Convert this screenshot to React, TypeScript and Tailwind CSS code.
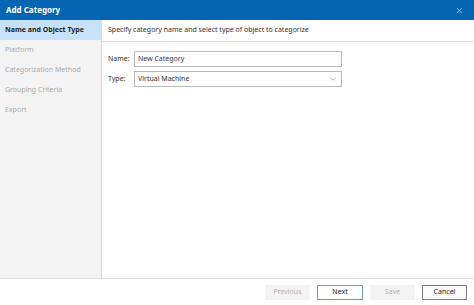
import { X, ChevronDown } from "lucide-react";

const steps = [
  { label: "Name and Object Type", active: true },
  { label: "Platform" },
  { label: "Categorization Method" },
  { label: "Grouping Criteria" },
  { label: "Export" },
];

const App = () => {
  return (
    <div
      className="w-[474px] h-[305px] flex flex-col bg-white text-[7px] text-[#333]"
      style={{ fontFamily: '"Noto Sans", "Liberation Sans", sans-serif' }}
    >
      {/* title bar */}
      <div className="h-[20px] bg-[#0565b3] flex items-center justify-between pl-[6px] pr-[10px]">
        <span className="text-white font-bold text-[8px]">Add Category</span>
        <X className="w-[9px] h-[9px] text-white" strokeWidth={1.5} />
      </div>

      <div className="flex flex-1 min-h-0 border-b border-[#dedede]">
        {/* steps */}
        <div className="w-[102px] bg-[#f3f3f3] border-r border-[#dcdcdc] flex flex-col">
          {steps.map((s) => (
            <div
              key={s.label}
              className={
                s.active
                  ? "h-[20px] flex items-center pl-[5px] bg-[#c7e2f8] font-bold text-[#1e1e1e]"
                  : "h-[20px] flex items-center pl-[5px] text-[#ababab]"
              }
            >
              {s.label}
            </div>
          ))}
        </div>

        {/* content */}
        <div className="flex-1 flex flex-col">
          <div className="h-[22px] flex items-center pl-[6px] border-b border-[#dedede] text-[#333]">
            Specify category name and select type of object to categorize
          </div>
          <div className="pl-[6px] pt-[9px] flex flex-col gap-[4px]">
            <div className="flex items-center">
              <span className="w-[26px]">Name:</span>
              <div className="w-[208px] h-[16px] border border-[#b9b9b9] flex items-center pl-[3px]">
                New Category
              </div>
            </div>
            <div className="flex items-center">
              <span className="w-[26px]">Type:</span>
              <div className="w-[208px] h-[16px] border border-[#b9b9b9] flex items-center justify-between pl-[3px] pr-[3px]">
                <span>Virtual Machine</span>
                <ChevronDown className="w-[10px] h-[10px] text-[#777]" strokeWidth={1.5} />
              </div>
            </div>
          </div>
        </div>
      </div>

      {/* footer */}
      <div className="h-[26px] flex items-center justify-end gap-[7px] pr-[7px]">
        <div className="w-[45px] h-[15px] bg-[#f3f3f3] text-[#b2b2b2] flex items-center justify-center">
          Previous
        </div>
        <div className="w-[46px] h-[15px] bg-white border border-[#5f9cd3] flex items-center justify-center text-[#222]">
          Next
        </div>
        <div className="w-[45px] h-[15px] bg-[#f3f3f3] text-[#b2b2b2] flex items-center justify-center">
          Save
        </div>
        <div className="w-[45px] h-[15px] bg-[#fafafa] border border-[#7d7d7d] flex items-center justify-center text-[#222]">
          Cancel
        </div>
      </div>
    </div>
  );
};

export default App;
